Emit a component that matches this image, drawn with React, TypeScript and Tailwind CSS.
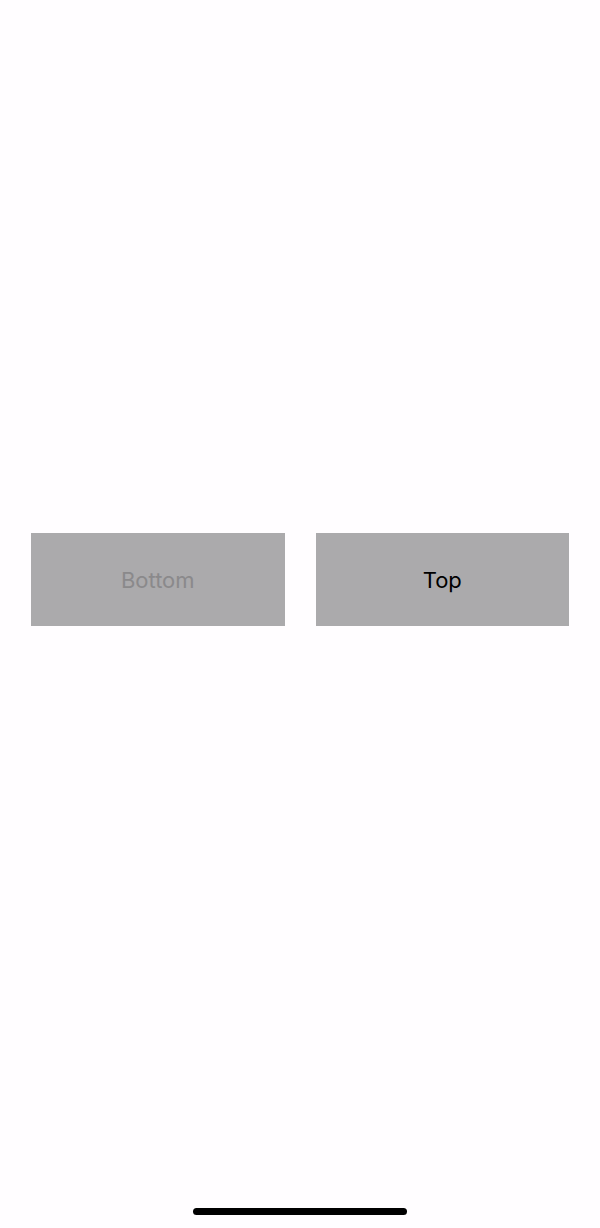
export default function App() {
  return (
    <div
      className="flex h-[1228px] w-[600px] flex-col bg-[#fffdff]"
      style={{ fontFamily: "Inter, 'Noto Sans', sans-serif" }}
    >
      <div className="flex gap-[31px] px-[31px] pt-[533px]">
        <button className="flex h-[93px] flex-1 items-center justify-center bg-[#abaaac] pt-[2px] text-[22px] text-[#8a898b]">
          Bottom
        </button>
        <button className="flex h-[93px] flex-1 items-center justify-center bg-[#abaaac] pt-[2px] text-[22px] text-black">
          Top
        </button>
      </div>
      <div className="mt-auto mb-[13px] flex justify-center">
        <div className="h-[7px] w-[214px] rounded-full bg-black" />
      </div>
    </div>
  );
}
